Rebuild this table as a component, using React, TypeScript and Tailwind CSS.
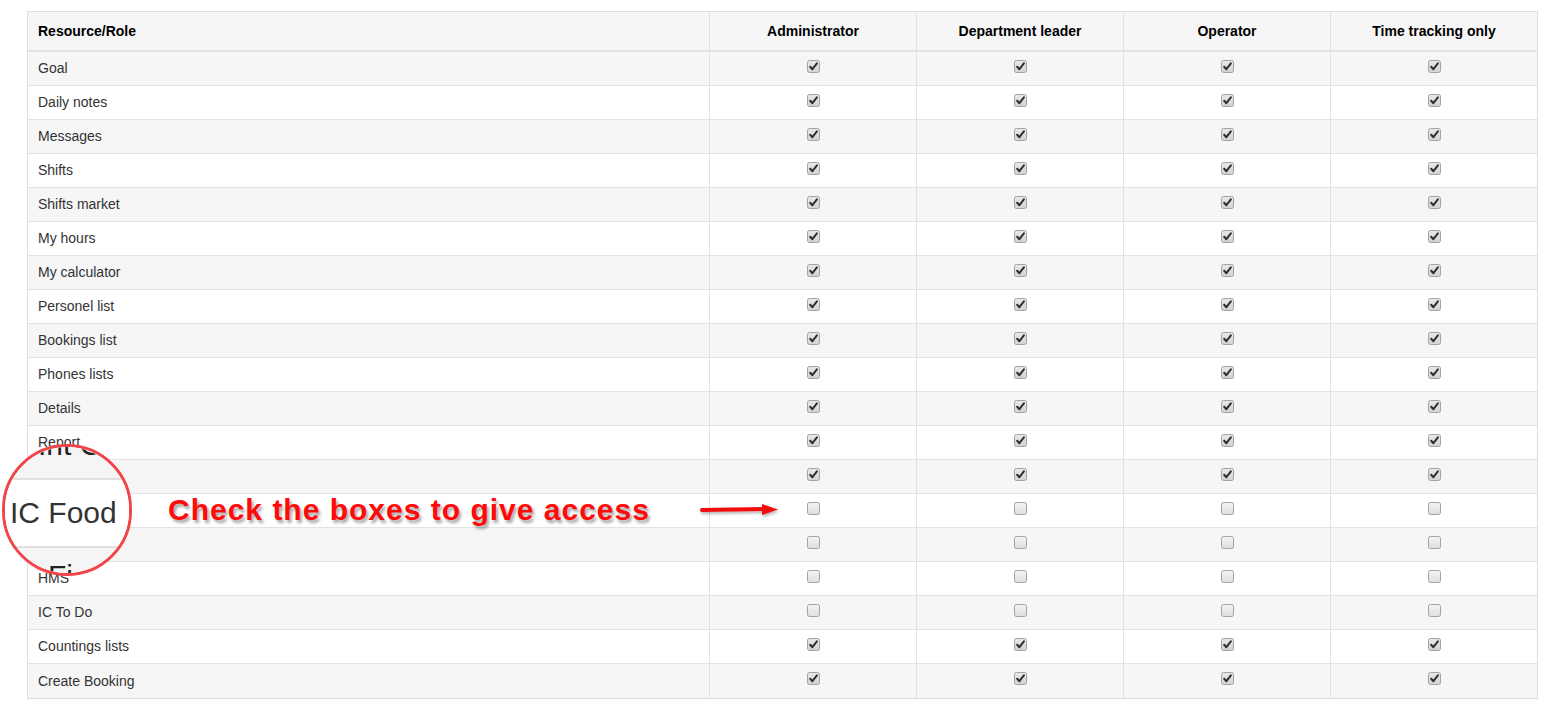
import React from "react";

const roles = ["Administrator", "Department leader", "Operator", "Time tracking only"];

const rows: [string, boolean][] = [
    ["Goal", true],
    ["Daily notes", true],
    ["Messages", true],
    ["Shifts", true],
    ["Shifts market", true],
    ["My hours", true],
    ["My calculator", true],
    ["Personel list", true],
    ["Bookings list", true],
    ["Phones lists", true],
    ["Details", true],
    ["Report", true],
    ["Int Checklists", true],
    ["IC Food", false],
    ["IC Fire", false],
    ["HMS", false],
    ["IC To Do", false],
    ["Countings lists", true],
    ["Create Booking", true],
];

const Box = ({ checked }: { checked: boolean }): React.ReactElement => (
    <svg width="13" height="13" viewBox="0 0 13 13">
        <defs>
            <linearGradient id={checked ? "gOn" : "gOff"} x1="0" y1="0" x2="0" y2="1">
                <stop offset="0" stopColor={checked ? "#e9e9e9" : "#f4f4f4"} />
                <stop offset="1" stopColor={checked ? "#d2d2d2" : "#dedede"} />
            </linearGradient>
        </defs>
        <rect
            x="0.5"
            y="0.5"
            width="12"
            height="12"
            rx="2"
            fill={`url(#${checked ? "gOn" : "gOff"})`}
            stroke="#a3a3a3"
        />
        {checked && (
            <path
                d="M3.2 6.8 L5.4 9.2 L9.9 3.4"
                fill="none"
                stroke="#2f2f2f"
                strokeWidth="2"
                strokeLinecap="round"
                strokeLinejoin="round"
            />
        )}
    </svg>
);

const cols = "grid grid-cols-[681px_207px_207px_207px_207px]";

export default function App(): React.ReactElement {
    return (
        <div className="relative w-[1546px] h-[726px] bg-white font-['Liberation_Sans',Arial,sans-serif] text-[14px] overflow-hidden">
            <div className="pt-[11px] pl-[27px]">
                <div className="w-[1511px] border border-[#dddddd]">
                    {/* header */}
                    <div className={`${cols} h-[40px] bg-[#f6f6f6] border-b-2 border-[#e2e2e2]`}>
                        <div className="flex items-center pl-[10px] font-bold text-black">
                            Resource/Role
                        </div>
                        {roles.map((r) => (
                            <div
                                key={r}
                                className="flex items-center justify-center border-l border-[#e2e2e2] font-bold text-black">
                                {r}
                            </div>
                        ))}
                    </div>
                    {rows.map(([name, on], i) => (
                        <div
                            key={name}
                            className={`${cols} h-[34px] ${i < rows.length - 1 ? "border-b" : ""} border-[#e2e2e2] ${
                                i % 2 === 0 ? "bg-[#f6f6f6]" : "bg-white"
                            }`}>
                            <div className="flex items-center pl-[10px] text-[#333333]">{name}</div>
                            {roles.map((r) => (
                                <div
                                    key={r}
                                    className="flex justify-center pt-[8px] border-l border-[#e2e2e2]">
                                    <Box checked={on} />
                                </div>
                            ))}
                        </div>
                    ))}
                </div>
            </div>

            {/* magnifier */}
            <div className="absolute left-[2px] top-[444px] w-[130px] h-[132px] rounded-full border-[3px] border-[#f04649] overflow-hidden bg-white flex flex-col">
                <div className="h-[31px] bg-[#f5f5f5] overflow-hidden pl-[33px]">
                    <div className="text-[30px] leading-none -mt-[17px] text-[#222]">Int C</div>
                </div>
                <div className="h-[2px] bg-[#e0e0e0]" />
                <div className="h-[66px] bg-white flex items-center pl-[5px]">
                    <span className="text-[30px] leading-none text-[#333333]">IC Food</span>
                </div>
                <div className="h-[2px] bg-[#e0e0e0]" />
                <div className="flex-1 bg-[#f5f5f5] overflow-hidden pl-[43px]">
                    <div className="text-[30px] leading-none mt-[13px] text-[#222]">Fi</div>
                </div>
            </div>

            {/* annotation */}
            <div className="absolute left-[168px] top-[492px] text-[30px] leading-[36px] font-bold tracking-[1px] text-[#ff0a0a] [text-shadow:2px_3px_3px_rgba(0,0,0,0.35)]">
                Check the boxes to give access
            </div>
            <svg
                className="absolute left-[698px] top-[501px]"
                width="84"
                height="20"
                viewBox="0 0 84 20">
                <defs>
                    <filter id="sh" x="-20%" y="-50%" width="140%" height="200%">
                        <feDropShadow dx="1" dy="2" stdDeviation="1.5" floodColor="#000" floodOpacity="0.3" />
                    </filter>
                </defs>
                <g filter="url(#sh)">
                    <path d="M4 9 L66 8" stroke="#f20d0d" strokeWidth="4" strokeLinecap="round" />
                    <path d="M64 3 L80 8.5 L64 14 Z" fill="#f20d0d" />
                </g>
            </svg>
        </div>
    );
}
